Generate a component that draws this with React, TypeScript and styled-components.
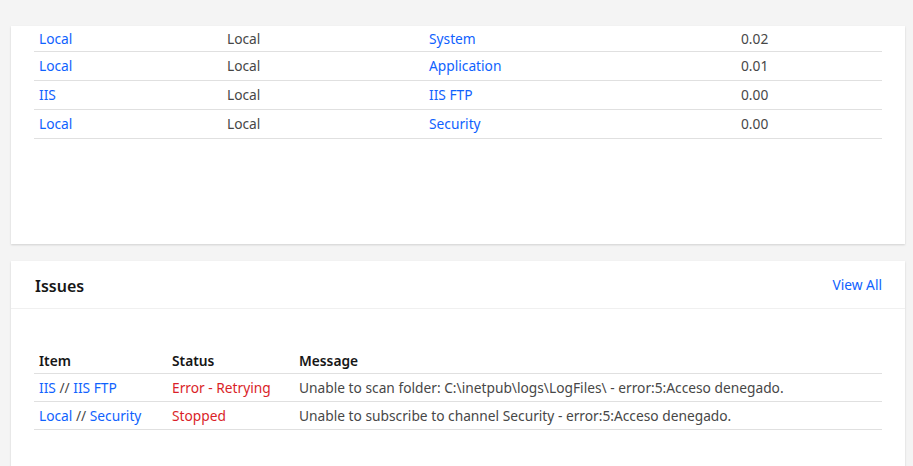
import React from "react";
import styled, { createGlobalStyle } from "styled-components";

const GlobalStyle = createGlobalStyle`
  html, body {
    margin: 0;
    padding: 0;
    background: #f4f4f4;
    font-family: "Noto Sans", "Liberation Sans", sans-serif;
    font-size: 13.75px;
    color: #393939;
  }
  * { box-sizing: border-box; }
`;

const Page = styled.div`
  display: flex;
  flex-direction: column;
  gap: 17px;
  padding: 26px 8px 0 11px;
  height: 466px;
  overflow: hidden;
`;

const Card = styled.section<{ $height?: number }>`
  background: #fff;
  box-shadow: 0 1px 2px rgba(0, 0, 0, 0.15);
  height: ${(p) => (p.$height ? `${p.$height}px` : "auto")};
  flex-shrink: 0;
`;

const CardBody = styled.div<{ $top?: number }>`
  padding: ${(p) => p.$top ?? 0}px 23px 0 23px;
`;

const CardHeader = styled.header`
  display: flex;
  justify-content: space-between;
  align-items: center;
  height: 48px;
  padding: 0 23px 0 24px;
  border-bottom: 1px solid #f0f0f0;
`;

const Title = styled.h2`
  margin: 0;
  font-size: 16px;
  font-weight: 600;
  color: #161616;
  padding-top: 2px;
`;

const Link = styled.a`
  color: #0f62fe;
  text-decoration: none;
  cursor: pointer;
`;

const Table = styled.table`
  width: 100%;
  border-collapse: collapse;
  table-layout: fixed;
`;

const Th = styled.th<{ $w?: number }>`
  text-align: left;
  font-weight: 600;
  color: #161616;
  height: 28px;
  padding: 3px 5px 0;
  border-bottom: 1px solid #e0e0e0;
  width: ${(p) => (p.$w ? `${p.$w}px` : "auto")};
`;

const Td = styled.td<{ $w?: number; $tone?: "error" }>`
  height: 29px;
  padding: 0 5px;
  border-bottom: 1px solid #e0e0e0;
  white-space: nowrap;
  color: ${(p) => (p.$tone === "error" ? "#da1e28" : "#474747")};
  width: ${(p) => (p.$w ? `${p.$w}px` : "auto")};
`;

const Sep = styled.span`
  color: #474747;
`;

const Row = styled.tr<{ $h: number }>`
  & > td {
    height: ${(p) => p.$h}px;
  }
`;

const sources = [
  { item: "Local", host: "Local", channel: "System", rate: "0.02" },
  { item: "Local", host: "Local", channel: "Application", rate: "0.01" },
  { item: "IIS", host: "Local", channel: "IIS FTP", rate: "0.00" },
  { item: "Local", host: "Local", channel: "Security", rate: "0.00" },
];

const issues = [
  {
    parent: "IIS",
    child: "IIS FTP",
    status: "Error - Retrying",
    message: "Unable to scan folder: C:\\inetpub\\logs\\LogFiles\\ - error:5:Acceso denegado.",
  },
  {
    parent: "Local",
    child: "Security",
    status: "Stopped",
    message: "Unable to subscribe to channel Security - error:5:Acceso denegado.",
  },
];

export default function App() {
  return (
    <>
      <GlobalStyle />
      <Page>
        <Card $height={218}>
          <CardBody>
            <Table>
              <tbody>
                {sources.map((s, i) => (
                  <Row key={i} $h={i === 0 ? 25 : 29}>
                    <Td $w={188}>
                      <Link>{s.item}</Link>
                    </Td>
                    <Td $w={202}>{s.host}</Td>
                    <Td $w={312}>
                      <Link>{s.channel}</Link>
                    </Td>
                    <Td>{s.rate}</Td>
                  </Row>
                ))}
              </tbody>
            </Table>
          </CardBody>
        </Card>
        <Card $height={220}>
          <CardHeader>
            <Title>Issues</Title>
            <Link>View All</Link>
          </CardHeader>
          <CardBody $top={36}>
            <Table>
              <thead>
                <tr>
                  <Th $w={133}>Item</Th>
                  <Th $w={127}>Status</Th>
                  <Th>Message</Th>
                </tr>
              </thead>
              <tbody>
                {issues.map((x, i) => (
                  <Row key={i} $h={28}>
                    <Td>
                      <Link>{x.parent}</Link> <Sep>//</Sep> <Link>{x.child}</Link>
                    </Td>
                    <Td $tone="error">{x.status}</Td>
                    <Td>{x.message}</Td>
                  </Row>
                ))}
              </tbody>
            </Table>
          </CardBody>
        </Card>
      </Page>
    </>
  );
}
